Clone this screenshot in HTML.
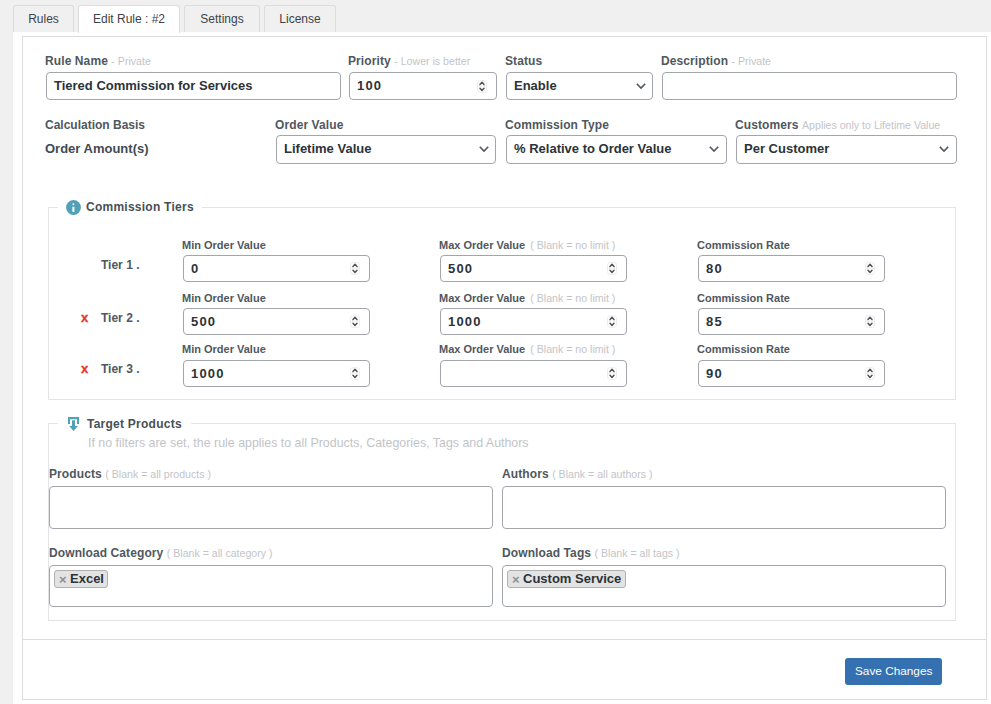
<!DOCTYPE html>
<html><head><meta charset="utf-8">
<style>
*{box-sizing:border-box;margin:0;padding:0}
html,body{width:991px;height:704px;overflow:hidden}
body{background:#f0f0f1;font-family:"Liberation Sans",sans-serif;position:relative;color:#50575e}
.a{position:absolute}
.t{position:absolute;white-space:nowrap;line-height:1}
.tab{position:absolute;top:5px;height:28px;border:1px solid #dcdcde;border-bottom:none;background:#f0f0f1;border-radius:3px 3px 0 0;font-size:12px;color:#3c434a;text-align:center;line-height:26px}
.tab.on{background:#fff;height:28px;z-index:2}
.panel{position:absolute;left:13px;top:32px;right:0;bottom:0;background:#fff}
.box{position:absolute;left:22px;top:36px;width:965px;height:664px;border:1px solid #dcdcde;background:#fff}
.lb{font-size:12px;font-weight:bold;color:#50575e;letter-spacing:0.1px}
.sm{font-size:10.6px;letter-spacing:0;font-weight:normal;color:#c3c4c7}
.in{position:absolute;border:1px solid #a2a5a9;border-radius:4px;background:#fff}
.val{font-size:13px;font-weight:bold;color:#2c3338}
.fs{position:absolute;border:1px solid #e4e4e6}
.leg{position:absolute;background:#fff}
.lb11{font-size:11px;font-weight:bold;color:#50575e}
.tier{font-size:12px;font-weight:bold;color:#50575e}
.num{letter-spacing:1.2px}
.xm{font-size:13px;font-weight:bold;color:#e3392c;-webkit-text-stroke:0.35px #e3392c}
.tag{position:absolute;height:18px;border:1px solid #b0b0b0;border-radius:3px;background:#e3e3e3}
svg{position:absolute;overflow:visible}
</style></head><body>
<div class="tab" style="left:13px;width:61px">Rules</div>
<div class="tab on" style="left:78px;width:102px">Edit Rule : #2</div>
<div class="tab" style="left:184px;width:76px">Settings</div>
<div class="tab" style="left:264px;width:72px">License</div>
<div class="panel"></div>
<div class="box"></div>

<!-- row 1 -->
<div class="t lb" style="left:45px;top:55px">Rule Name <span class="sm">- Private</span></div>
<div class="in" style="left:46px;top:72px;width:295px;height:28px"></div>
<div class="t val" style="left:54px;top:79px">Tiered Commission for Services</div>

<div class="t lb" style="left:348px;top:55px">Priority <span class="sm">- Lower is better</span></div>
<div class="in" style="left:349px;top:72px;width:148px;height:28px"></div>
<div class="t val num" style="left:357px;top:79px">100</div>
<svg class="spin" style="left:477px;top:80px" width="10" height="13" viewBox="0 0 10 13"><path d="M0.5 3.5 Q0.5 0.5 3.5 0.5 H6.5 Q9.5 0.5 9.5 3.5 V9.5 Q9.5 12.5 6.5 12.5 H3.5 Q0.5 12.5 0.5 9.5 Z" fill="#fff" stroke="#ececec"/><path d="M0.5 6.4 H9.5" stroke="#ececec" stroke-width="0.8"/><path d="M3 4.6 L5 2.3 L7 4.6 M3 8.2 L5 10.5 L7 8.2" fill="none" stroke="#555" stroke-width="1.5" stroke-linecap="round" stroke-linejoin="round"/></svg>

<div class="t lb" style="left:505px;top:55px">Status</div>
<div class="in" style="left:506px;top:72px;width:147px;height:28px"></div>
<div class="t val" style="left:514px;top:79px">Enable</div>
<svg style="left:636px;top:83px" width="10" height="6" viewBox="0 0 10 6"><path d="M0.8 0.8 L5 5 L9.2 0.8" fill="none" stroke="#50575e" stroke-width="1.6"/></svg>

<div class="t lb" style="left:661px;top:55px">Description <span class="sm">- Private</span></div>
<div class="in" style="left:662px;top:72px;width:295px;height:28px"></div>

<!-- row 2 -->
<div class="t lb" style="left:45px;top:119px;letter-spacing:0">Calculation Basis</div>
<div class="t" style="left:45px;top:142px;font-size:13px;font-weight:bold;color:#434a51">Order Amount(s)</div>

<div class="t lb" style="left:275px;top:119px">Order Value</div>
<div class="in" style="left:276px;top:135px;width:220px;height:29px"></div>
<div class="t val" style="left:284px;top:142px">Lifetime Value</div>
<svg style="left:479px;top:146px" width="10" height="6" viewBox="0 0 10 6"><path d="M0.8 0.8 L5 5 L9.2 0.8" fill="none" stroke="#50575e" stroke-width="1.6"/></svg>

<div class="t lb" style="left:505px;top:119px">Commission Type</div>
<div class="in" style="left:506px;top:135px;width:221px;height:29px"></div>
<div class="t val" style="left:514px;top:142px">% Relative to Order Value</div>
<svg style="left:709px;top:146px" width="10" height="6" viewBox="0 0 10 6"><path d="M0.8 0.8 L5 5 L9.2 0.8" fill="none" stroke="#50575e" stroke-width="1.6"/></svg>

<div class="t lb" style="left:735px;top:119px">Customers <span class="sm">Applies only to Lifetime Value</span></div>
<div class="in" style="left:736px;top:135px;width:221px;height:29px"></div>
<div class="t val" style="left:744px;top:142px">Per Customer</div>
<svg style="left:939px;top:146px" width="10" height="6" viewBox="0 0 10 6"><path d="M0.8 0.8 L5 5 L9.2 0.8" fill="none" stroke="#50575e" stroke-width="1.6"/></svg>

<!-- fieldset 1 -->
<div class="fs" style="left:48px;top:207px;width:908px;height:193px"></div>
<div class="leg" style="left:58px;top:198px;width:144px;height:20px"></div>
<svg style="left:66px;top:200.3px" width="15" height="15" viewBox="0 0 15 15"><circle cx="7.5" cy="7.5" r="7.4" fill="#50a1b8"/><circle cx="7.4" cy="4.2" r="0.95" fill="#fff"/><rect x="6.4" y="6.8" width="2" height="5.2" fill="#fff"/></svg>
<div class="t" style="left:86px;top:201px;font-size:12px;font-weight:bold;color:#484f56;letter-spacing:0.25px">Commission Tiers</div>

<!-- tier rows -->
<div class="t tier" style="left:101px;top:259px">Tier 1 .</div>
<div class="t xm" style="left:81px;top:311px">x</div>
<div class="t tier" style="left:101px;top:312px">Tier 2 .</div>
<div class="t xm" style="left:81px;top:362px">x</div>
<div class="t tier" style="left:101px;top:363px">Tier 3 .</div>

<div class="t lb11" style="left:182px;top:240px">Min Order Value</div>
<div class="in" style="left:183px;top:255px;width:187px;height:27px"></div>
<div class="t val num" style="left:191px;top:262px">0</div>
<svg style="left:350px;top:262px" width="10" height="13" viewBox="0 0 10 13"><path d="M0.5 3.5 Q0.5 0.5 3.5 0.5 H6.5 Q9.5 0.5 9.5 3.5 V9.5 Q9.5 12.5 6.5 12.5 H3.5 Q0.5 12.5 0.5 9.5 Z" fill="#fff" stroke="#ececec"/><path d="M0.5 6.4 H9.5" stroke="#ececec" stroke-width="0.8"/><path d="M3 4.6 L5 2.3 L7 4.6 M3 8.2 L5 10.5 L7 8.2" fill="none" stroke="#555" stroke-width="1.5" stroke-linecap="round" stroke-linejoin="round"/></svg>
<div class="t lb11" style="left:439px;top:240px">Max Order Value <span class="sm" style="margin-left:2px">( Blank = no limit )</span></div>
<div class="in" style="left:440px;top:255px;width:187px;height:27px"></div>
<div class="t val num" style="left:448px;top:262px">500</div>
<svg style="left:607px;top:262px" width="10" height="13" viewBox="0 0 10 13"><path d="M0.5 3.5 Q0.5 0.5 3.5 0.5 H6.5 Q9.5 0.5 9.5 3.5 V9.5 Q9.5 12.5 6.5 12.5 H3.5 Q0.5 12.5 0.5 9.5 Z" fill="#fff" stroke="#ececec"/><path d="M0.5 6.4 H9.5" stroke="#ececec" stroke-width="0.8"/><path d="M3 4.6 L5 2.3 L7 4.6 M3 8.2 L5 10.5 L7 8.2" fill="none" stroke="#555" stroke-width="1.5" stroke-linecap="round" stroke-linejoin="round"/></svg>
<div class="t lb11" style="left:697px;top:240px">Commission Rate</div>
<div class="in" style="left:698px;top:255px;width:187px;height:27px"></div>
<div class="t val num" style="left:706px;top:262px">80</div>
<svg style="left:865px;top:262px" width="10" height="13" viewBox="0 0 10 13"><path d="M0.5 3.5 Q0.5 0.5 3.5 0.5 H6.5 Q9.5 0.5 9.5 3.5 V9.5 Q9.5 12.5 6.5 12.5 H3.5 Q0.5 12.5 0.5 9.5 Z" fill="#fff" stroke="#ececec"/><path d="M0.5 6.4 H9.5" stroke="#ececec" stroke-width="0.8"/><path d="M3 4.6 L5 2.3 L7 4.6 M3 8.2 L5 10.5 L7 8.2" fill="none" stroke="#555" stroke-width="1.5" stroke-linecap="round" stroke-linejoin="round"/></svg>
<div class="t lb11" style="left:182px;top:293px">Min Order Value</div>
<div class="in" style="left:183px;top:308px;width:187px;height:27px"></div>
<div class="t val num" style="left:191px;top:315px">500</div>
<svg style="left:350px;top:315px" width="10" height="13" viewBox="0 0 10 13"><path d="M0.5 3.5 Q0.5 0.5 3.5 0.5 H6.5 Q9.5 0.5 9.5 3.5 V9.5 Q9.5 12.5 6.5 12.5 H3.5 Q0.5 12.5 0.5 9.5 Z" fill="#fff" stroke="#ececec"/><path d="M0.5 6.4 H9.5" stroke="#ececec" stroke-width="0.8"/><path d="M3 4.6 L5 2.3 L7 4.6 M3 8.2 L5 10.5 L7 8.2" fill="none" stroke="#555" stroke-width="1.5" stroke-linecap="round" stroke-linejoin="round"/></svg>
<div class="t lb11" style="left:439px;top:293px">Max Order Value <span class="sm" style="margin-left:2px">( Blank = no limit )</span></div>
<div class="in" style="left:440px;top:308px;width:187px;height:27px"></div>
<div class="t val num" style="left:448px;top:315px">1000</div>
<svg style="left:607px;top:315px" width="10" height="13" viewBox="0 0 10 13"><path d="M0.5 3.5 Q0.5 0.5 3.5 0.5 H6.5 Q9.5 0.5 9.5 3.5 V9.5 Q9.5 12.5 6.5 12.5 H3.5 Q0.5 12.5 0.5 9.5 Z" fill="#fff" stroke="#ececec"/><path d="M0.5 6.4 H9.5" stroke="#ececec" stroke-width="0.8"/><path d="M3 4.6 L5 2.3 L7 4.6 M3 8.2 L5 10.5 L7 8.2" fill="none" stroke="#555" stroke-width="1.5" stroke-linecap="round" stroke-linejoin="round"/></svg>
<div class="t lb11" style="left:697px;top:293px">Commission Rate</div>
<div class="in" style="left:698px;top:308px;width:187px;height:27px"></div>
<div class="t val num" style="left:706px;top:315px">85</div>
<svg style="left:865px;top:315px" width="10" height="13" viewBox="0 0 10 13"><path d="M0.5 3.5 Q0.5 0.5 3.5 0.5 H6.5 Q9.5 0.5 9.5 3.5 V9.5 Q9.5 12.5 6.5 12.5 H3.5 Q0.5 12.5 0.5 9.5 Z" fill="#fff" stroke="#ececec"/><path d="M0.5 6.4 H9.5" stroke="#ececec" stroke-width="0.8"/><path d="M3 4.6 L5 2.3 L7 4.6 M3 8.2 L5 10.5 L7 8.2" fill="none" stroke="#555" stroke-width="1.5" stroke-linecap="round" stroke-linejoin="round"/></svg>
<div class="t lb11" style="left:182px;top:344px">Min Order Value</div>
<div class="in" style="left:183px;top:360px;width:187px;height:27px"></div>
<div class="t val num" style="left:191px;top:367px">1000</div>
<svg style="left:350px;top:367px" width="10" height="13" viewBox="0 0 10 13"><path d="M0.5 3.5 Q0.5 0.5 3.5 0.5 H6.5 Q9.5 0.5 9.5 3.5 V9.5 Q9.5 12.5 6.5 12.5 H3.5 Q0.5 12.5 0.5 9.5 Z" fill="#fff" stroke="#ececec"/><path d="M0.5 6.4 H9.5" stroke="#ececec" stroke-width="0.8"/><path d="M3 4.6 L5 2.3 L7 4.6 M3 8.2 L5 10.5 L7 8.2" fill="none" stroke="#555" stroke-width="1.5" stroke-linecap="round" stroke-linejoin="round"/></svg>
<div class="t lb11" style="left:439px;top:344px">Max Order Value <span class="sm" style="margin-left:2px">( Blank = no limit )</span></div>
<div class="in" style="left:440px;top:360px;width:187px;height:27px"></div>
<svg style="left:607px;top:367px" width="10" height="13" viewBox="0 0 10 13"><path d="M0.5 3.5 Q0.5 0.5 3.5 0.5 H6.5 Q9.5 0.5 9.5 3.5 V9.5 Q9.5 12.5 6.5 12.5 H3.5 Q0.5 12.5 0.5 9.5 Z" fill="#fff" stroke="#ececec"/><path d="M0.5 6.4 H9.5" stroke="#ececec" stroke-width="0.8"/><path d="M3 4.6 L5 2.3 L7 4.6 M3 8.2 L5 10.5 L7 8.2" fill="none" stroke="#555" stroke-width="1.5" stroke-linecap="round" stroke-linejoin="round"/></svg>
<div class="t lb11" style="left:697px;top:344px">Commission Rate</div>
<div class="in" style="left:698px;top:360px;width:187px;height:27px"></div>
<div class="t val num" style="left:706px;top:367px">90</div>
<svg style="left:865px;top:367px" width="10" height="13" viewBox="0 0 10 13"><path d="M0.5 3.5 Q0.5 0.5 3.5 0.5 H6.5 Q9.5 0.5 9.5 3.5 V9.5 Q9.5 12.5 6.5 12.5 H3.5 Q0.5 12.5 0.5 9.5 Z" fill="#fff" stroke="#ececec"/><path d="M0.5 6.4 H9.5" stroke="#ececec" stroke-width="0.8"/><path d="M3 4.6 L5 2.3 L7 4.6 M3 8.2 L5 10.5 L7 8.2" fill="none" stroke="#555" stroke-width="1.5" stroke-linecap="round" stroke-linejoin="round"/></svg>

<!-- fieldset 2 -->
<div class="fs" style="left:48px;top:423px;width:908px;height:198px"></div>
<div class="leg" style="left:58px;top:414px;width:133px;height:20px"></div>
<svg style="left:62px;top:412px" width="24" height="24" viewBox="0 0 24 24"><path d="M6 5 H17 V12 H15 V7.2 H8 V12 H6 Z" fill="#50a1b8"/><rect x="10" y="8.3" width="3" height="6" fill="#50a1b8"/><path d="M7.2 14 H15.8 L11.5 19.1 Z" fill="#50a1b8"/></svg>
<div class="t" style="left:87px;top:418px;font-size:12px;font-weight:bold;color:#484f56;letter-spacing:0.25px">Target Products</div>
<div class="t" style="left:88px;top:437px;font-size:12.4px;color:#c3c4c7">If no filters are set, the rule applies to all Products, Categories, Tags and Authors</div>

<div class="t lb" style="left:49px;top:468px">Products <span class="sm">( Blank = all products )</span></div>
<div class="in" style="left:49px;top:486px;width:444px;height:43px"></div>
<div class="t lb" style="left:502px;top:468px">Authors <span class="sm">( Blank = all authors )</span></div>
<div class="in" style="left:502px;top:486px;width:444px;height:43px"></div>

<div class="t lb" style="left:49px;top:547px">Download Category <span class="sm">( Blank = all category )</span></div>
<div class="in" style="left:49px;top:565px;width:444px;height:42px"></div>
<div class="tag" style="left:54px;top:570px;width:54px"></div>
<div class="t" style="left:59px;top:573px;font-size:13px;font-weight:bold;color:#8c8f94">×</div>
<div class="t val" style="left:70px;top:572px">Excel</div>
<div class="t lb" style="left:502px;top:547px">Download Tags <span class="sm">( Blank = all tags )</span></div>
<div class="in" style="left:502px;top:565px;width:444px;height:42px"></div>
<div class="tag" style="left:507px;top:570px;width:119px"></div>
<div class="t" style="left:512px;top:573px;font-size:13px;font-weight:bold;color:#8c8f94">×</div>
<div class="t val" style="left:523px;top:572px">Custom Service</div>

<div class="a" style="left:23px;top:639px;width:964px;height:1px;background:#dcdcde"></div>
<div class="a" style="left:845px;top:658px;width:97px;height:27px;background:#3571b0;border-radius:3px"></div>
<div class="t" style="left:855px;top:666px;font-size:11.8px;color:#fff">Save Changes</div>
</body></html>
